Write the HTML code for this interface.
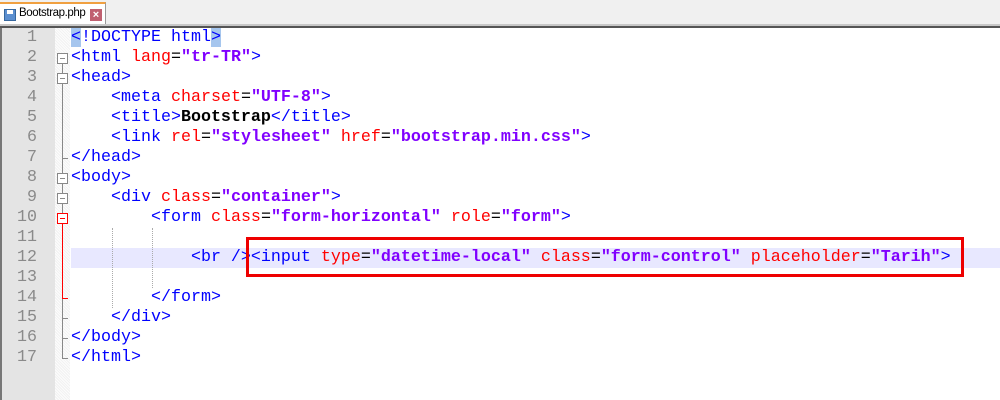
<!DOCTYPE html>
<html><head><style>
body{margin:0;width:1000px;height:400px;overflow:hidden;background:#fff;position:relative;font-family:"Liberation Mono",monospace;}
.tabbar{position:absolute;left:0;top:0;width:1000px;height:24px;background:#f0f0f0;}
.sep1{position:absolute;left:0;top:24px;width:1000px;height:2px;background:#c8c8c8;}
.sep2{position:absolute;left:0;top:26px;width:1000px;height:2px;background:#555;}
.tab{position:absolute;left:0;top:2px;width:106px;height:22px;background:#fff;border-top:2px solid #f0a040;border-right:1px solid #999;box-sizing:border-box;font-family:"Liberation Sans",sans-serif;font-size:11.5px;}
.tab .t{position:absolute;left:19px;top:3px;color:#000;letter-spacing:-0.4px;}
.disk{position:absolute;left:4px;top:5px;width:12px;height:12px;background:#5b8fd0;border:1px solid #36679e;box-sizing:border-box;}
.disk:after{content:"";position:absolute;left:2px;top:0;width:6px;height:4px;background:#fff;}
.x{position:absolute;left:90px;top:5px;width:12px;height:12px;background:#c06070;color:#fff;font-size:11px;line-height:12px;text-align:center;font-weight:bold;}
.gut{position:absolute;left:0;top:28px;width:55px;height:372px;background:#e4e4e4;border-left:2px solid #777;box-sizing:border-box;}
.fold{position:absolute;left:55px;top:28px;width:15px;height:372px;background:repeating-linear-gradient(45deg,#f2f2f2 0 1px,#fcfcfc 1px 2px);}
.ln{position:absolute;left:0;width:37px;text-align:right;color:#8a8a8a;font-size:16.67px;line-height:20px;}
.code{position:absolute;left:71px;font-size:16.67px;line-height:20px;white-space:pre;color:#000;}
.hl{position:absolute;left:71px;top:248px;width:929px;height:20px;background:#e8e8ff;}
.b{color:#0000ff}.r{color:#ff0000}.v{color:#8000ff;font-weight:bold}.k{color:#000;font-weight:bold}
.sel{background:#a6c6ee}
.g{position:absolute;border-left:1px dotted #aaa;}
.box{position:absolute;left:57px;width:11px;height:11px;border:1px solid #888;box-sizing:border-box;background:#fff;}
.box:after{content:"";position:absolute;left:2px;top:4px;width:5px;height:1px;background:#888;}
.box.red{border-color:#f00}.box.red:after{background:#f00}
.vl{position:absolute;left:62px;width:1px;background:#888;}
.tk{position:absolute;left:62px;width:6px;height:1px;background:#888;}
.rbox{position:absolute;left:246px;top:237px;width:718px;height:40px;border:3px solid #e00;box-sizing:border-box;}
</style></head><body>
<div class="tabbar"></div>
<div class="tab"><div class="disk"></div><span class="t">Bootstrap.php</span><div class="x">×</div></div>
<div class="sep1"></div><div class="sep2"></div>
<div class="gut"></div><div class="fold"></div>
<div class="hl"></div>
<div class="ln" style="top:28px">1</div><div class="ln" style="top:48px">2</div><div class="ln" style="top:68px">3</div><div class="ln" style="top:88px">4</div><div class="ln" style="top:108px">5</div><div class="ln" style="top:128px">6</div><div class="ln" style="top:148px">7</div><div class="ln" style="top:168px">8</div><div class="ln" style="top:188px">9</div><div class="ln" style="top:208px">10</div><div class="ln" style="top:228px">11</div><div class="ln" style="top:248px">12</div><div class="ln" style="top:268px">13</div><div class="ln" style="top:288px">14</div><div class="ln" style="top:308px">15</div><div class="ln" style="top:328px">16</div><div class="ln" style="top:348px">17</div>
<div class="vl" style="top:64px;height:294px"></div>
<div class="vl" style="top:215px;height:84px;background:#f00"></div>
<div class="box" style="top:53px"></div>
<div class="box" style="top:73px"></div>
<div class="tk" style="top:158px"></div>
<div class="box" style="top:173px"></div>
<div class="box" style="top:193px"></div>
<div class="box red" style="top:213px"></div>
<div class="tk" style="top:298px;background:#f00"></div>
<div class="tk" style="top:318px"></div>
<div class="tk" style="top:338px"></div>
<div class="tk" style="top:358px"></div>
<div class="g" style="left:112px;top:228px;height:80px"></div>
<div class="g" style="left:152px;top:228px;height:60px"></div>
<div class="code" style="top:28px"><span class="b"><span class="sel">&lt;</span>!DOCTYPE html<span class="sel">&gt;</span></span></div>
<div class="code" style="top:48px"><span class="b">&lt;html </span><span class="r">lang</span>=<span class="v">"tr-TR"</span><span class="b">&gt;</span></div>
<div class="code" style="top:68px"><span class="b">&lt;head&gt;</span></div>
<div class="code" style="top:88px">    <span class="b">&lt;meta </span><span class="r">charset</span>=<span class="v">"UTF-8"</span><span class="b">&gt;</span></div>
<div class="code" style="top:108px">    <span class="b">&lt;title&gt;</span><span class="k">Bootstrap</span><span class="b">&lt;/title&gt;</span></div>
<div class="code" style="top:128px">    <span class="b">&lt;link </span><span class="r">rel</span>=<span class="v">"stylesheet"</span> <span class="r">href</span>=<span class="v">"bootstrap.min.css"</span><span class="b">&gt;</span></div>
<div class="code" style="top:148px"><span class="b">&lt;/head&gt;</span></div>
<div class="code" style="top:168px"><span class="b">&lt;body&gt;</span></div>
<div class="code" style="top:188px">    <span class="b">&lt;div </span><span class="r">class</span>=<span class="v">"container"</span><span class="b">&gt;</span></div>
<div class="code" style="top:208px">        <span class="b">&lt;form </span><span class="r">class</span>=<span class="v">"form-horizontal"</span> <span class="r">role</span>=<span class="v">"form"</span><span class="b">&gt;</span></div>
<div class="code" style="top:248px">            <span class="b">&lt;br /&gt;&lt;input </span><span class="r">type</span>=<span class="v">"datetime-local"</span> <span class="r">class</span>=<span class="v">"form-control"</span> <span class="r">placeholder</span>=<span class="v">"Tarih"</span><span class="b">&gt;</span></div>
<div class="code" style="top:288px">        <span class="b">&lt;/form&gt;</span></div>
<div class="code" style="top:308px">    <span class="b">&lt;/div&gt;</span></div>
<div class="code" style="top:328px"><span class="b">&lt;/body&gt;</span></div>
<div class="code" style="top:348px"><span class="b">&lt;/html&gt;</span></div>
<div class="rbox"></div>
</body></html>
